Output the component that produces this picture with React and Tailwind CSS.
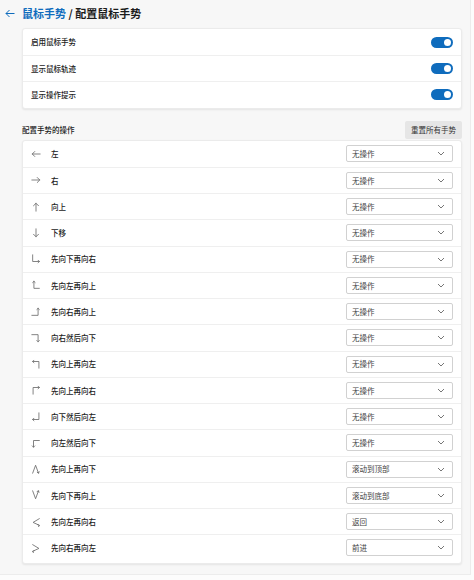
import React from 'react';

const FONT = { fontFamily: '"Noto Sans CJK SC", "Noto Sans", sans-serif' };

// gesture icon paths, 12x12 box
const ICONS = {
  left: 'M11 6H1.5 M4.5 3L1.5 6l3 3',
  right: 'M1 6h9.5 M7.5 3l3 3-3 3',
  up: 'M6 11V1.5 M3 4.5l3-3 3 3',
  down: 'M6 1v9.5 M3 7.5l3 3 3-3',
  downRight: 'M2 1v8h8 M8.5 7.5L10 9l-1.5 1.5',
  leftUp: 'M10 10H3.5V1.5 M2 3l1.5-1.5L5 3',
  rightUp: 'M1 10h7.5V1.5 M7 3l1.5-1.5L10 3',
  rightDown: 'M1 2h7.5v8.5 M7 9l1.5 1.5L10 9',
  upLeft: 'M9.5 11V3H2 M3.5 1.5L2 3l1.5 1.5',
  upRight: 'M2.5 11V3H10 M8.5 1.5L10 3 8.5 4.5',
  downLeft: 'M9.5 1v8H2 M3.5 7.5L2 9l1.5 1.5',
  leftDown: 'M10 3H3v8 M1.5 9.5L3 11l1.5-1.5',
  upDown: 'M2 11L5.5 1.5 9 11 M7.5 10l1.5 1 .8-1.8',
  downUp: 'M2 1l3.5 9.5L9 1 M7.3 1.8L9 1l.6 1.8',
  leftRight: 'M10 2L2.5 6.5 10 10 M8 9.2l2 .8-1 1.8',
  rightLeft: 'M2 2l7.5 4.5L2 10 M4 9.2L2 10l1 1.8',
};

const gestures = [
  { icon: 'left', label: '左', action: '无操作' },
  { icon: 'right', label: '右', action: '无操作' },
  { icon: 'up', label: '向上', action: '无操作' },
  { icon: 'down', label: '下移', action: '无操作' },
  { icon: 'downRight', label: '先向下再向右', action: '无操作' },
  { icon: 'leftUp', label: '先向左再向上', action: '无操作' },
  { icon: 'rightUp', label: '先向右再向上', action: '无操作' },
  { icon: 'rightDown', label: '向右然后向下', action: '无操作' },
  { icon: 'upLeft', label: '先向上再向左', action: '无操作' },
  { icon: 'upRight', label: '先向上再向右', action: '无操作' },
  { icon: 'downLeft', label: '向下然后向左', action: '无操作' },
  { icon: 'leftDown', label: '向左然后向下', action: '无操作' },
  { icon: 'upDown', label: '先向上再向下', action: '滚动到顶部' },
  { icon: 'downUp', label: '先向下再向上', action: '滚动到底部' },
  { icon: 'leftRight', label: '先向左再向右', action: '返回' },
  { icon: 'rightLeft', label: '先向右再向左', action: '前进' },
];

const GestureIcon = ({ name }) => (
  <svg width="10" height="10" viewBox="0 0 12 12" fill="none" stroke="#6a6a6a" strokeWidth="1" strokeLinecap="round" strokeLinejoin="round">
    <path d={ICONS[name]} />
  </svg>
);

const Toggle = () => (
  <div className="w-[22px] h-[11px] rounded-full bg-[#0f6cbd] flex items-center justify-end pr-[2px]">
    <div className="w-[7px] h-[7px] rounded-full bg-white" />
  </div>
);

const Select = ({ value }) => (
  <div className="w-[107px] h-[17px] border border-[#d1d1d1] rounded-[2px] bg-white flex items-center justify-between pl-[5px] pr-[7px]">
    <span className="text-[7.5px] leading-none text-[#444]">{value}</span>
    <svg width="8" height="5" viewBox="0 0 8 5" fill="none" stroke="#666" strokeWidth="0.9">
      <path d="M1 1l3 3 3-3" />
    </svg>
  </div>
);

export default function App() {
  return (
    <div className="w-[474px] h-[580px] bg-[#fcfcfc]" style={FONT}>
      <div className="w-[471px] h-[575px] bg-[#f7f7f7] border-r border-b border-[#ececec]">
        {/* header */}
        <div className="flex items-center h-[26px] pl-[5px]">
          <svg width="10" height="9" viewBox="0 0 10 9" fill="none" stroke="#0f6cbd" strokeWidth="1">
            <path d="M9.5 4.5H1 M4.5 1L1 4.5 4.5 8" />
          </svg>
          <div className="ml-[7px] text-[11px] font-bold leading-none whitespace-pre">
            <span className="text-[#0f6cbd]">鼠标手势</span>
            <span className="text-[#1b1b1b]"> / 配置鼠标手势</span>
          </div>
        </div>

        <div className="ml-[22px] w-[440px]">
          {/* toggles card */}
          <div className="mt-[2px] bg-white rounded-[3px] border border-[#ebebeb] shadow-[0_1px_2px_rgba(0,0,0,0.08)]">
            {['启用鼠标手势', '显示鼠标轨迹', '显示操作提示'].map((t, i) => (
              <div key={t} className={`h-[26.2px] flex items-center justify-between pl-[8px] pr-[8px] ${i > 0 ? 'border-t border-[#efefef]' : ''}`}>
                <span className="text-[7.5px] leading-none font-medium text-[#1b1b1b]">{t}</span>
                <Toggle />
              </div>
            ))}
          </div>

          {/* section header */}
          <div className="mt-[12px] h-[18px] flex items-center justify-between">
            <span className="text-[7.5px] leading-none font-medium text-[#1b1b1b]">配置手势的操作</span>
            <div className="h-[18px] px-[6px] bg-[#e6e6e6] rounded-[2px] flex items-center text-[7.5px] leading-none text-[#333]">重置所有手势</div>
          </div>

          {/* gestures card */}
          <div className="mt-[1px] bg-white rounded-[3px] border border-[#ebebeb] shadow-[0_1px_2px_rgba(0,0,0,0.08)] pb-[2px]">
            {gestures.map((g, i) => (
              <div key={g.label} className={`h-[26.25px] flex items-center pl-[8px] pr-[8px] ${i > 0 ? 'border-t border-[#efefef]' : ''}`}>
                <GestureIcon name={g.icon} />
                <span className="ml-[10px] flex-1 text-[7.5px] leading-none font-medium text-[#1b1b1b]">{g.label}</span>
                <Select value={g.action} />
              </div>
            ))}
          </div>
        </div>
      </div>
    </div>
  );
}
